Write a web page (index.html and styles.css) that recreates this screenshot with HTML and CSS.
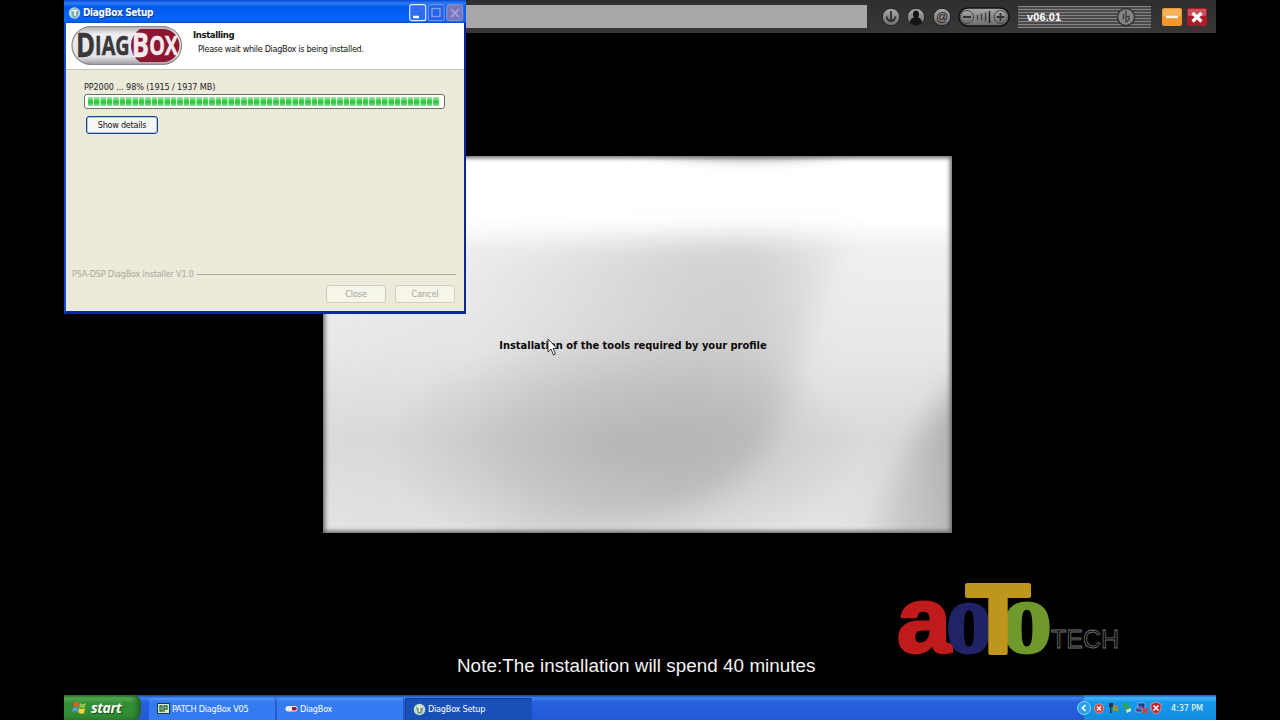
FILE: index.html
```html
<!DOCTYPE html>
<html lang="en">

<head>
    <meta charset="UTF-8">
    <meta name="viewport" content="width=device-width, initial-scale=1.0">
    <title>DiagBox Setup</title>
    <link rel="stylesheet" href="styles.css">
</head>

<body>
<div class="screen">
    <!-- top toolbar -->
    <div class="toolbar">
        <div class="address"></div>
        <svg class="tools" width="134" height="24" viewBox="882 5 134 24">
            <defs>
                <linearGradient id="metal" x1="0" y1="0" x2="0" y2="1">
                    <stop offset="0" stop-color="#a9a9a9"/>
                    <stop offset="1" stop-color="#6b6b6b"/>
                </linearGradient>
            </defs>
            <g fill="url(#metal)" stroke="#222" stroke-width="1">
                <circle cx="891" cy="17" r="8.7"/>
                <circle cx="916" cy="17" r="8.7"/>
                <circle cx="942" cy="17" r="8.7"/>
                <rect x="959" y="8" width="50" height="18" rx="9" stroke="#111" stroke-width="1.5"/>
                <circle cx="967" cy="17" r="6.5" stroke="#444"/>
                <circle cx="1000.500" cy="17" r="6.5" stroke="#444"/>
            </g>
            <path d="M891 11v10M886.500 16.500q1 4.500 4.500 4.500t4.500-4.500" fill="none" stroke="#303030" stroke-width="1.800"/>
            <path d="M910 23c0-4 2-5 4-5.500-2-3-1-7 2-7s4 4 2 7c2 .5 4 2 4 5.500-3 3-9 3-12 0z" fill="#151515"/>
            <text class="at" x="942" y="20.500" text-anchor="middle">@</text>
            <path d="M963 17h8M996.500 17h8M1000.500 13v8" stroke="#333" stroke-width="1.800"/>
            <path d="M977.500 15v5M981.500 13.500v7M985.500 12.500v9" stroke="#444" stroke-width="1.500"/>
            <path d="M989.500 11v12" stroke="#222" stroke-width="1.500"/>
        </svg>
        <div class="version">
            <span>v06.01</span>
            <svg width="20" height="20" viewBox="0 0 20 20">
                <circle cx="10" cy="10" r="8.500" fill="#858585" stroke="#333" stroke-width="1.500"/>
                <path d="M10 3.500v12M7.500 6.500v6M10 9.500h3v3l-3 3" fill="none" stroke="#444" stroke-width="1.500"/>
            </svg>
        </div>
        <svg class="app-buttons" width="46" height="20" viewBox="0 0 46 20">
            <rect x="0" y="1" width="20" height="18" rx="2" fill="#ec982c"/>
            <rect x="1" y="2" width="18" height="7" rx="1" fill="#f5b25c"/>
            <path d="M4 10h12" stroke="#fff3dc" stroke-width="2.500"/>
            <rect x="25" y="1" width="20" height="18" rx="2" fill="#ad1a27"/>
            <rect x="26" y="2" width="18" height="7" rx="1" fill="#c9515b"/>
            <path d="M30.500 6l9 8.500M39.500 6l-9 8.500" stroke="#fff" stroke-width="3.200"/>
        </svg>
    </div>

    <!-- installation panel -->
    <div class="stage">
        <div class="panel">
            <svg class="sheen" width="629" height="377" viewBox="0 0 629 377">
                <defs>
                    <linearGradient id="base" x1="0" y1="0" x2="0" y2="1">
                        <stop offset="0" stop-color="#fff"/>
                        <stop offset=".17" stop-color="#fff"/>
                        <stop offset=".25" stop-color="#f1f0f1"/>
                        <stop offset=".5" stop-color="#e9e8e9"/>
                        <stop offset=".75" stop-color="#dbd9da"/>
                        <stop offset="1" stop-color="#e4e2e3"/>
                    </linearGradient>
                    <linearGradient id="fold" x1="0" y1="0" x2="1" y2="0">
                        <stop offset="0" stop-color="#aaa" stop-opacity="0"/>
                        <stop offset=".3" stop-color="#aaa" stop-opacity=".06"/>
                        <stop offset=".7" stop-color="#aaa" stop-opacity=".4"/>
                        <stop offset=".82" stop-color="#aaa" stop-opacity=".42"/>
                        <stop offset="1" stop-color="#aaa" stop-opacity=".08"/>
                    </linearGradient>
                    <linearGradient id="corner" x1="0" y1="0" x2="1" y2="0">
                        <stop offset="0" stop-color="#888" stop-opacity=".1"/>
                        <stop offset="1" stop-color="#888" stop-opacity=".65"/>
                    </linearGradient>
                    <radialGradient id="dark">
                        <stop offset="0" stop-color="#888" stop-opacity=".32"/>
                        <stop offset=".5" stop-color="#888" stop-opacity=".2"/>
                        <stop offset="1" stop-color="#888" stop-opacity="0"/>
                    </radialGradient>
                    <filter id="soft" x="-30%" y="-30%" width="160%" height="160%"><feGaussianBlur stdDeviation="14"/></filter>
                    <filter id="shade" x="-30%" y="-100%" width="160%" height="300%"><feGaussianBlur stdDeviation="14 6"/></filter>
                </defs>
                <rect width="629" height="377" fill="url(#base)"/>
                <path d="M50 98C220 88 390 80 526 82C500 120 485 190 468 245C445 300 420 318 370 350L200 390H0V250C50 230 50 150 50 98z" fill="url(#fold)" filter="url(#soft)"/>
                <ellipse cx="300" cy="290" rx="240" ry="115" fill="url(#dark)"/>
                <path d="M300-14H534C510 10 350 10 300-14z" fill="#888" opacity=".65" filter="url(#shade)"/>
                <path d="M670 195C610 245 565 310 540 410H670z" fill="url(#corner)" filter="url(#soft)"/>
            </svg>
            <p class="panel-text">Installation of the tools required by your profile</p>
        </div>
    </div>

    <div class="footer">
        <p class="note">Note:The installation will spend 40 minutes</p>
        <svg class="aoto" width="230" height="80" viewBox="893 578 230 80">
            <g class="aoto-letters">
                <text class="red" x="897" y="652" font-size="93" textLength="54" lengthAdjust="spacingAndGlyphs">a</text>
                <text class="blue" x="946" y="652" font-size="102" textLength="46" lengthAdjust="spacingAndGlyphs">o</text>
                <text class="green" x="1002" y="652" font-size="104" textLength="50" lengthAdjust="spacingAndGlyphs">o</text>
                <text class="gold" x="966" y="652.500" font-size="98" textLength="64" lengthAdjust="spacingAndGlyphs">T</text>
            </g>
            <text class="tech" x="1051" y="648" textLength="68" lengthAdjust="spacingAndGlyphs">TECH</text>
        </svg>
    </div>

    <!-- taskbar -->
    <div class="taskbar">
        <div class="start">
            <svg width="18" height="16" viewBox="0 0 18 16">
                <path d="M3 3q3-2 5 0L7 7Q5 5 2 7z" fill="#f15a29"/>
                <path d="M9 3q3 2 6 0l-1 4q-3 2-6 0z" fill="#8cc63f"/>
                <path d="M2 8q3-2 5 0l-1 4Q4 10 1 12z" fill="#5a9cf0"/>
                <path d="M8 8q3 2 6 0l-1 5q-3 2-6-1z" fill="#ffd23c"/>
            </svg>
            <span>start</span>
        </div>
        <div class="task">
            <svg width="13" height="12" viewBox="0 0 13 12">
                <rect x=".5" y=".5" width="12" height="10" fill="#d8ead8" stroke="#173c36"/>
                <path d="M3 3v5h2V3zM7 9V3h3v3H7" fill="none" stroke="#286634" stroke-width="1.300"/>
            </svg>
            <span>PATCH DiagBox V05</span>
        </div>
        <div class="task">
            <svg width="13" height="12" viewBox="0 0 13 12">
                <rect x=".5" y="3" width="12" height="5.500" rx="2.700" fill="#eee"/>
                <path d="M7 4h3a1.800 1.800 0 0 1 0 3.600H7z" fill="#a71335"/>
            </svg>
            <span>DiagBox</span>
        </div>
        <div class="task active">
            <svg width="13" height="13" viewBox="0 0 13 13">
                <circle cx="6.500" cy="6.500" r="5.800" fill="#cbdcca"/>
                <path d="M3 4l5-1 2 2-1 5-4 1z" fill="#69988b"/>
                <path d="M4 4h5M6.500 4v5" stroke="#f4f2db" stroke-width="1.500"/>
            </svg>
            <span>DiagBox Setup</span>
        </div>
        <div class="tray">
            <svg width="92" height="18" viewBox="1077 699 92 18">
                <circle cx="1084" cy="708" r="6.500" fill="#2ba0ee" stroke="#8fd0fa"/>
                <path d="M1085.500 705l-3 3 3 3" fill="none" stroke="#fff" stroke-width="1.700"/>
                <circle cx="1099" cy="708.500" r="4.700" fill="#d9433f" stroke="#e6a3a5" stroke-width=".7"/>
                <path d="M1097 706.500l4 4M1101 706.500l-4 4" stroke="#fff" stroke-width="1.300"/>
                <path d="M1109 703h4v4h-1.500v6h-1.500v-6h-1z" fill="#29323d"/>
                <path d="M1113 705h5v6h-5z" fill="#92923c"/>
                <path d="M1123 703h5v3l3 1v3l-4 3-3-3 2-2-3-1z" fill="#30a653"/>
                <path d="M1126 710l5-2v3l-4 2z" fill="#d9e0df"/>
                <path d="M1138 703h7v6h-7zM1136 707h6v5h-6z" fill="#213b8a" stroke="#a5bce0" stroke-width=".7"/>
                <path d="M1142 708l6 5M1148 708l-6 5" stroke="#e2362e" stroke-width="1.800"/>
                <path d="M1151 704l5-2 5 2v4q0 4-5 6-5-2-5-6z" fill="#c9202e" stroke="#e4a9b0" stroke-width=".7"/>
                <path d="M1153.500 705.500l5 5M1158.500 705.500l-5 5" stroke="#fff" stroke-width="1.500"/>
            </svg>
            <span>4:37 PM</span>
        </div>
    </div>

    <!-- setup window -->
    <div class="window">
        <div class="titlebar">
            <svg width="13" height="14" viewBox="0 0 13 14">
                <circle cx="6.500" cy="7" r="5.800" fill="#b8d7e3"/>
                <path d="M3 4l5-2 3 3-2 6-4 1z" fill="#7ba9a6"/>
                <path d="M3.500 4.500h6M7 5v5" stroke="#fff" stroke-width="1.600"/>
            </svg>
            <span class="title">DiagBox Setup</span>
            <svg class="controls" width="55" height="18" viewBox="0 0 55 18">
                <rect x=".7" y=".7" width="16" height="16" rx="2" fill="#2f6cf0" stroke="#e5edff" stroke-width="1.200"/>
                <path d="M4 13h6" stroke="#fff" stroke-width="2.500"/>
                <rect x="19.200" y=".7" width="16" height="16" rx="2" fill="#2461e5" stroke="#7ba2f0"/>
                <rect x="23" y="4.500" width="8" height="8" fill="none" stroke="#7ba2f0" stroke-width="1.400"/>
                <rect x="37.700" y=".7" width="16" height="16" rx="2" fill="#7977b8" stroke="#8999dc"/>
                <path d="M42 5l8 8M50 5l-8 8" stroke="#aaa8dc" stroke-width="1.600"/>
            </svg>
        </div>
        <div class="header">
            <svg width="112" height="41" viewBox="71 25 112 41">
                <defs>
                    <linearGradient id="silver" x1="0" y1="0" x2="0" y2="1">
                        <stop offset="0" stop-color="#a9a9ad"/>
                        <stop offset=".2" stop-color="#efeff1"/>
                        <stop offset=".8" stop-color="#e2e2e4"/>
                        <stop offset="1" stop-color="#9b9b9f"/>
                    </linearGradient>
                </defs>
                <rect x="72" y="26.500" width="109.500" height="38" rx="19" fill="url(#silver)" stroke="#87878c" stroke-width="1.200"/>
                <path d="M140 29h23a16.500 16.500 0 0 1 0 33h-23q-9-6-9-16.500t9-16.500z" fill="#8e1532"/>
                <text class="brand" x="76" y="57" textLength="102" lengthAdjust="spacingAndGlyphs"><tspan class="big">D</tspan><tspan dy="-2">IAG</tspan><tspan class="big light" dx="3" dy="2">B</tspan><tspan class="light" dy="-2">OX</tspan></text>
            </svg>
            <div class="header-text">
                <h1>Installing</h1>
                <p>Please wait while DiagBox is being installed.</p>
            </div>
        </div>
        <div class="content">
            <p class="status">PP2000 ... 98% (1915 / 1937 MB)</p>
            <div class="progress"><div class="progress-bar"></div></div>
            <button class="btn details">Show details</button>
            <div class="branding"><span>PSA-DSP DiagBox Installer V1.0</span></div>
            <div class="actions">
                <button class="btn" disabled>Close</button>
                <button class="btn" disabled>Cancel</button>
            </div>
        </div>
    </div>

    <svg class="cursor" width="12" height="19" viewBox="0 0 12 19">
        <path d="M1 1v13l3-3 2.500 6 2-1L6 10.500h4z" fill="#fff" stroke="#222" stroke-width=".9"/>
    </svg>
</div>
</body>

</html>
```
FILE: styles.css
```css
* {
    box-sizing: border-box;
    margin: 0;
    padding: 0;
}
body {
    background: #000;
    overflow: hidden;
    font-family: "DejaVu Sans Condensed", "DejaVu Sans", sans-serif;
    font-size: 9px;
}
svg {
    display: block;
    flex: none;
}
.screen {
    position: relative;
    display: flex;
    flex-direction: column;
    width: 1152px;
    height: 720px;
    margin: 0 auto;
    white-space: nowrap;
}

/* top toolbar */
.toolbar {
    display: flex;
    align-items: center;
    height: 33px;
    padding-right: 8px;
    background: linear-gradient(#302e2f, #393637);
}
.address {
    width: 803px;
    height: 23px;
    background: #a9a7a8;
}
.tools {
    margin-left: 15px;
}
.at {
    font: 12px "Liberation Sans", sans-serif;
    fill: #222;
}
.version {
    display: flex;
    align-items: center;
    justify-content: space-between;
    width: 133px;
    height: 22px;
    margin-left: 2px;
    padding: 0 15px 0 9px;
    background: repeating-linear-gradient(#858384 0 1px, #4b494a 1px 3px);
    color: #fff;
    font: bold 11px "Liberation Sans", sans-serif;
    letter-spacing: .1px;
}
.app-buttons {
    margin-left: 11px;
}

/* installation panel */
.stage {
    height: 500px;
    padding: 123px 0 0 259px;
}
.panel {
    position: relative;
    display: flex;
    align-items: center;
    justify-content: center;
    width: 629px;
    height: 377px;
    padding: 2px 9px 0 0;
}
.sheen {
    position: absolute;
    left: 0;
    top: 0;
}
.panel::after {
    content: "";
    position: absolute;
    inset: 0;
    box-shadow: inset 0 0 4px 2px #666;
}
.panel-text {
    position: relative;
    font: bold 11px "DejaVu Sans Condensed", sans-serif;
    color: #080808;
}
.footer {
    display: flex;
    align-items: flex-start;
    height: 162px;
    padding: 45px 93px 0 393px;
    justify-content: space-between;
}
.note {
    padding-top: 77px;
    color: #f4f4f4;
    font: 18.8px/22px "Liberation Sans", sans-serif;
    letter-spacing: .06px;
}
.aoto {
    overflow: visible;
}
.aoto-letters {
    font-family: "Liberation Sans", sans-serif;
    font-weight: bold;
    stroke-width: 3;
    stroke-linejoin: round;
}
.red {
    fill: #c01b1c;
    stroke: #c01b1c;
}
.blue {
    font-family: "Liberation Serif", serif;
    fill: #202365;
    stroke: #202365;
}
.green {
    font-family: "Liberation Serif", serif;
    fill: #70992c;
    stroke: #70992c;
}
.gold {
    fill: #bd961b;
    stroke: #bd961b;
    stroke-width: 4;
}
.tech {
    font: 26px "Liberation Sans", sans-serif;
    fill: #000;
    stroke: #747474;
    stroke-width: .8;
}

/* taskbar */
.taskbar {
    display: flex;
    align-items: stretch;
    height: 25px;
    background: linear-gradient(#1941a5, #3e83ef 3px, #2662df 7px, #2359d8);
    color: #fff;
}
.start {
    display: flex;
    align-items: center;
    gap: 2px;
    width: 77px;
    margin-right: 8px;
    padding-left: 7px;
    border-radius: 0 8px 8px 0;
    background: linear-gradient(#2f6e2f, #58ad54 3px, #348f37 8px, #318a32);
    box-shadow: inset -4px 0 5px #236528;
    font: italic bold 14px "Open Sans", sans-serif;
    letter-spacing: -.4px;
    text-shadow: 1px 1px 1px #174b19;
}
.task {
    display: flex;
    align-items: center;
    gap: 2px;
    width: 127px;
    margin: 3px 1px 0 0;
    padding-left: 8px;
    border-radius: 2px 2px 0 0;
    background: linear-gradient(#5796fa, #347af0 4px, #347cf2);
    box-shadow: inset -1px 0 #2459c5;
    letter-spacing: -.2px;
}
.task.active {
    background: #1950b8;
    box-shadow: inset 1px 1px #123c90;
}
.tray {
    display: flex;
    align-items: center;
    gap: 2px;
    margin-left: auto;
    width: 139px;
    background: linear-gradient(#185dab, #43b6f8 3px, #159aed 7px, #128bdd) 7px 0 / 132px 100% no-repeat;
    letter-spacing: -.1px;
}

/* setup window */
.window {
    position: absolute;
    left: 0;
    top: 0;
    display: flex;
    flex-direction: column;
    width: 402px;
    height: 314px;
    border: solid #0826a6;
    border-width: 0 2px 3px 2px;
    border-left-color: #0b4bdc;
    background: #eceada;
}
.titlebar {
    display: flex;
    align-items: center;
    height: 23px;
    margin: 0 -2px;
    padding: 2px 2px 0 4px;
    background: linear-gradient(#0648cf, #2c7df8 3px, #0059ed 7px, #0864fb 20px, #0550d5);
    color: #fff;
}
.title {
    margin-left: 2px;
    font: bold 10px "DejaVu Sans Condensed", sans-serif;
    letter-spacing: -.35px;
    text-shadow: 1px 1px #0a3799;
}
.controls {
    margin-left: auto;
}
.header {
    display: flex;
    height: 47px;
    padding: 2px 0 0 5px;
    background: #fff;
    border-bottom: 1px solid #c5c3b5;
    color: #111;
}
.header-text {
    padding: 4px 0 0 10px;
}
.header-text h1 {
    font-size: 9.5px;
    line-height: 11px;
    letter-spacing: -.4px;
}
.header-text p {
    padding: 4px 0 0 5px;
    line-height: 11px;
    letter-spacing: -.31px;
}
.brand {
    font: bold 26px "Open Sans", sans-serif;
    fill: #38383b;
    stroke: #38383b;
    stroke-width: .5;
}
.brand .big {
    font-size: 34px;
}
.brand .light {
    fill: #f3eaec;
    stroke: #f3eaec;
}
.content {
    display: flex;
    flex-direction: column;
    flex: 1;
    padding: 11px 8px 8px 6px;
}
.status {
    padding-left: 12px;
    line-height: 12px;
    letter-spacing: -.1px;
    color: #222;
}
.progress {
    width: 361px;
    height: 15px;
    margin: 1px 0 7px 12px;
    padding: 2px 3px;
    border: 1px solid #6d6d68;
    border-radius: 3px;
    background: #fff;
}
.progress-bar {
    width: 352px;
    height: 9px;
    background: repeating-linear-gradient(90deg, transparent 0 4.8px, #fff 5.4px 5.8px, transparent 6.4px), linear-gradient(#a9eaae, #37ce48 45%, #2bc23c 60%, #90e398);
}
.btn {
    width: 60px;
    height: 18px;
    border: 1px solid #cfcdbd;
    border-radius: 3px;
    background: #f5f5e9;
    color: #a6a498;
    font: inherit;
    letter-spacing: -.1px;
}
.details {
    width: 72px;
    margin-left: 14px;
    border-color: #1d4680;
    background: #f7f7f4;
    box-shadow: inset 0 0 0 1px #a9c3ec;
    color: #111;
    letter-spacing: -.25px;
}
.branding {
    display: flex;
    align-items: center;
    gap: 3px;
    margin-top: auto;
    color: #aaa89b;
    line-height: 12px;
    letter-spacing: -.18px;
}
.branding::after {
    content: "";
    flex: 1;
    height: 1px;
    background: #aaa99c;
}
.actions {
    display: flex;
    justify-content: flex-end;
    gap: 9px;
    margin-top: 5px;
    padding-right: 1px;
}
.cursor {
    position: absolute;
    left: 483px;
    top: 338px;
}
```
